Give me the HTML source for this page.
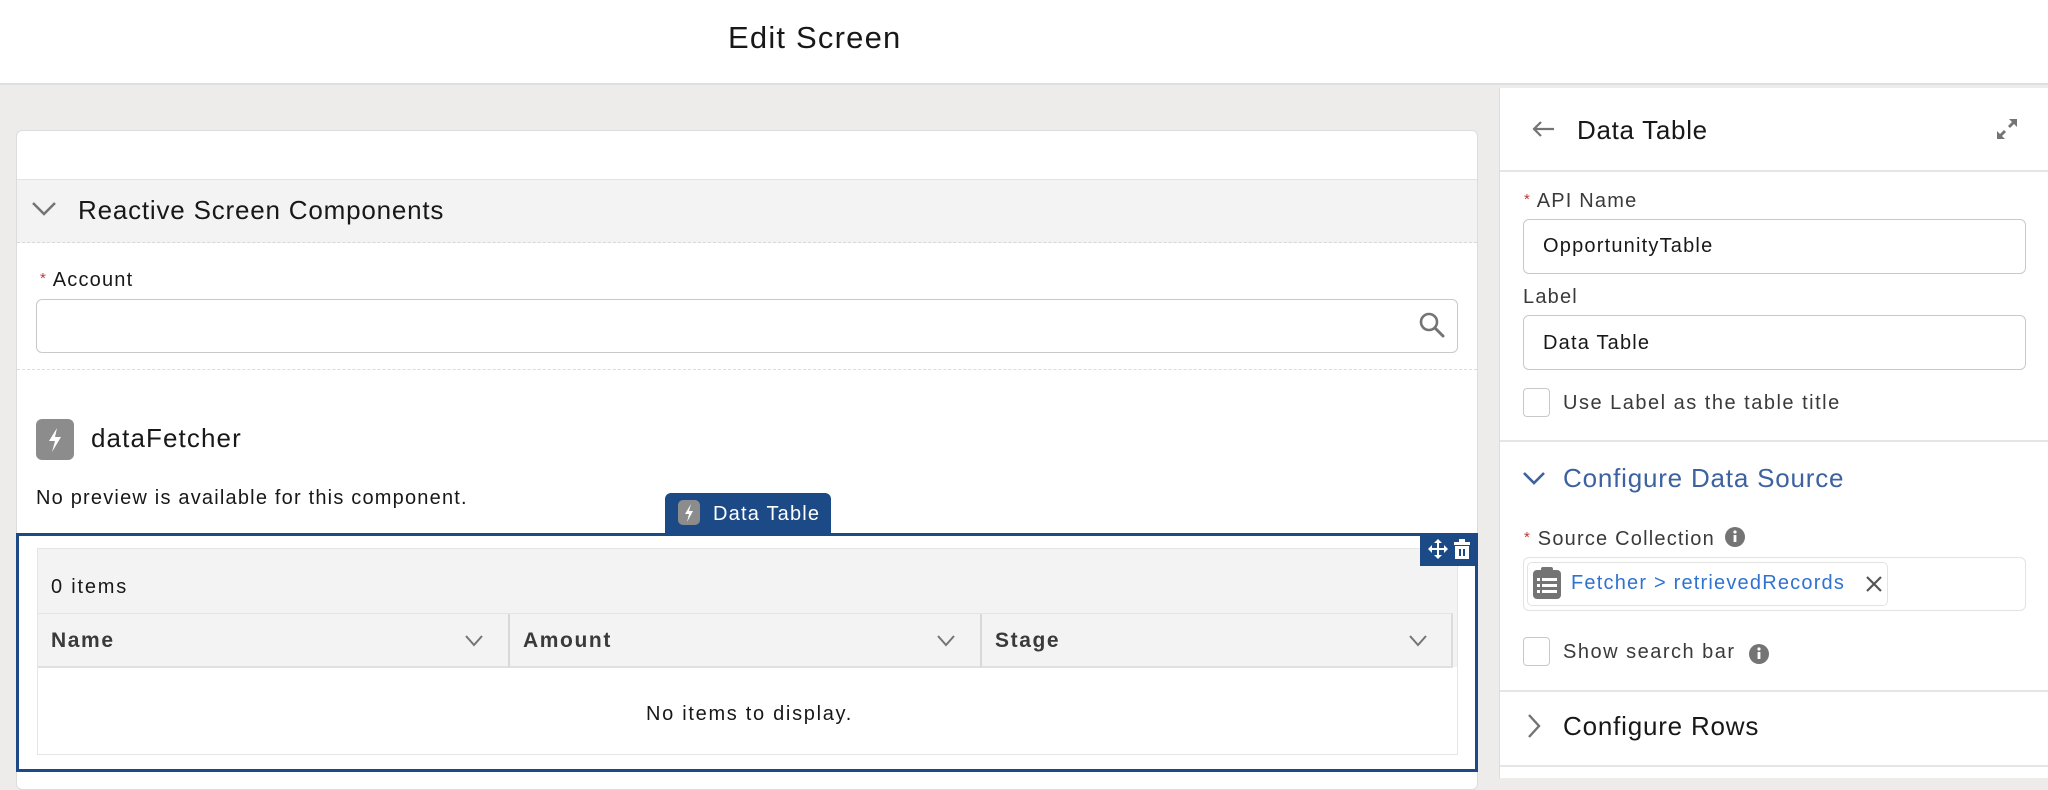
<!DOCTYPE html>
<html><head><meta charset="utf-8"><style>
*{box-sizing:border-box;margin:0;padding:0}
body{width:2048px;height:778px;overflow:hidden;background:#edecea;font-family:"Liberation Sans",sans-serif;color:#181818;position:relative}
.a{position:absolute}
.t{position:absolute;white-space:nowrap;line-height:1}
.s{font-size:20px;letter-spacing:1.2px}
.L{font-size:26px;letter-spacing:0.8px}
.inp{position:absolute;background:#fff;border:1.5px solid #c9c9c9;border-radius:6px}
.cb{position:absolute;width:27px;height:29px;border:1.5px solid #c9c9c9;border-radius:4px;background:#fff}
.req{color:#c23934}
.hl{position:absolute;height:1.5px;background:#e5e5e5}
</style></head><body>
<div class="a" style="left:0;top:0;width:2048px;height:85px;background:#fff;border-bottom:2px solid #dedede"></div>
<div class="t" style="left:728px;top:22px;font-size:31px;letter-spacing:1.2px">Edit Screen</div>

<!-- left card -->
<div class="a" style="left:16px;top:130px;width:1462px;height:660px;background:#fff;border:1.5px solid #dcdcdc;border-radius:6px"></div>
<div class="a" style="left:17px;top:179px;width:1460px;height:64px;background:#f3f3f3;border-bottom:1.5px dashed #d8d8d8;border-top:1px solid #e3e3e3"></div>
<svg class="a" style="left:31px;top:200px" width="26" height="18" viewBox="0 0 26 18"><path d="M2 3 L13 14 L24 3" fill="none" stroke="#747474" stroke-width="2.5"/></svg>
<div class="t L" style="left:78px;top:197px">Reactive Screen Components</div>
<div class="t s" style="left:40px;top:270px"><span class="req" style="font-size:15px;vertical-align:3px">*</span> Account</div>
<div class="inp" style="left:36px;top:299px;width:1422px;height:54px"></div>
<svg class="a" style="left:1418px;top:311px" width="28" height="28" viewBox="0 0 28 28"><circle cx="11" cy="11" r="8" fill="none" stroke="#747474" stroke-width="2.6"/><path d="M17 17 L25 25" stroke="#747474" stroke-width="3" stroke-linecap="round"/></svg>
<div class="a" style="left:17px;top:369px;width:1460px;border-top:1.5px dashed #dcdcdc"></div>

<div class="a" style="left:36px;top:419px;width:38px;height:41px;background:#8c8c8c;border-radius:6px"></div>
<svg class="a" style="left:44px;top:426px" width="22" height="28" viewBox="0 0 22 28"><path d="M13 2 L5 15 H11 L8 26 L17 11 H11 Z" fill="#fff"/></svg>
<div class="t" style="left:91px;top:425px;font-size:26px;letter-spacing:1.1px">dataFetcher</div>
<div class="t s" style="left:36px;top:488px">No preview is available for this component.</div>

<div class="a" style="left:665px;top:493px;width:166px;height:42px;background:#1b4a86;border-radius:6px 6px 0 0"></div>
<div class="a" style="left:678px;top:500px;width:22px;height:25px;background:#8c8c8c;border-radius:5px"></div>
<svg class="a" style="left:682px;top:503px" width="14" height="20" viewBox="0 0 14 20"><path d="M9 1 L3 11 H7 L5 19 L11 8 H7 Z" fill="#fff"/></svg>
<div class="t s" style="left:713px;top:504px;color:#fff">Data Table</div>

<div class="a" style="left:16px;top:533px;width:1462px;height:239px;border:3px solid #1b4a86"></div>

<div class="a" style="left:37px;top:548px;width:1421px;height:207px;border:1.5px solid #e5e5e5;background:#fff"></div>
<div class="a" style="left:38px;top:549px;width:1419px;height:118px;background:#f3f3f3"></div>
<div class="t" style="left:51px;top:577px;font-size:20px;letter-spacing:1.8px">0 items</div>
<div class="a" style="left:38px;top:613px;width:1415px;height:55px;border-top:1.5px solid #e5e5e5;border-bottom:2px solid #e0e0e0;border-right:2px solid #dcdcdc"></div>
<div class="a" style="left:508px;top:614px;width:2px;height:53px;background:#d8d8d8"></div>
<div class="a" style="left:980px;top:614px;width:2px;height:53px;background:#d8d8d8"></div>
<div class="t" style="left:51px;top:630px;font-size:21px;letter-spacing:1.6px;font-weight:bold;color:#3a3a3a">Name</div>
<div class="t" style="left:523px;top:630px;font-size:21px;letter-spacing:1.6px;font-weight:bold;color:#3a3a3a">Amount</div>
<div class="t" style="left:995px;top:630px;font-size:21px;letter-spacing:1.6px;font-weight:bold;color:#3a3a3a">Stage</div>
<svg class="a" style="left:464px;top:634px" width="20" height="14" viewBox="0 0 20 14"><path d="M2 2 L10 11 L18 2" fill="none" stroke="#747474" stroke-width="2"/></svg>
<svg class="a" style="left:936px;top:634px" width="20" height="14" viewBox="0 0 20 14"><path d="M2 2 L10 11 L18 2" fill="none" stroke="#747474" stroke-width="2"/></svg>
<svg class="a" style="left:1408px;top:634px" width="20" height="14" viewBox="0 0 20 14"><path d="M2 2 L10 11 L18 2" fill="none" stroke="#747474" stroke-width="2"/></svg>
<div class="t" style="left:646px;top:704px;font-size:20px;letter-spacing:1.7px">No items to display.</div>

<div class="a" style="left:1420px;top:534px;width:57px;height:32px;background:#1b4a86"></div>
<svg class="a" style="left:1427px;top:538px" width="22" height="22" viewBox="0 0 22 22" fill="#fff"><path d="M11 1 L7 5 H10 V10 H5 V7 L1 11 L5 15 V12 H10 V17 H7 L11 21 L15 17 H12 V12 H17 V15 L21 11 L17 7 V10 H12 V5 H15 Z"/></svg>
<svg class="a" style="left:1452px;top:538px" width="20" height="22" viewBox="0 0 20 22" fill="#fff"><rect x="7" y="1" width="6" height="3"/><rect x="2" y="4" width="16" height="3"/><path d="M3 8 H17 V21 H3 Z M7 11 V18 H9 V11 Z M11 11 V18 H13 V11 Z" fill-rule="evenodd"/></svg>

<!-- right panel -->
<div class="a" style="left:1499px;top:88px;width:549px;height:690px;background:#fff;border-left:1.5px solid #ddd"></div>
<svg class="a" style="left:1530px;top:119px" width="26" height="20" viewBox="0 0 26 20"><path d="M24 10 H4 M11 3 L4 10 L11 17" fill="none" stroke="#747474" stroke-width="2.2"/></svg>
<div class="t" style="left:1577px;top:117px;font-size:26px;letter-spacing:0.7px">Data Table</div>
<svg class="a" style="left:1995px;top:117px" width="24" height="24" viewBox="0 0 24 24" fill="#747474"><path d="M14 2 H22 V10 L19 7 L15 11 L13 9 L17 5 Z"/><path d="M10 22 H2 V14 L5 17 L9 13 L11 15 L7 19 Z"/></svg>
<div class="hl" style="left:1500px;top:170px;width:548px"></div>
<div class="t s" style="left:1524px;top:191px;color:#3a3a3a"><span class="req" style="font-size:15px;vertical-align:3px">*</span> API Name</div>
<div class="inp" style="left:1523px;top:219px;width:503px;height:55px"></div>
<div class="t s" style="left:1543px;top:236px">OpportunityTable</div>
<div class="t s" style="left:1523px;top:287px;color:#3a3a3a">Label</div>
<div class="inp" style="left:1523px;top:315px;width:503px;height:55px"></div>
<div class="t s" style="left:1543px;top:333px">Data Table</div>
<div class="cb" style="left:1523px;top:388px"></div>
<div class="t s" style="left:1563px;top:393px;color:#3a3a3a;letter-spacing:1.5px">Use Label as the table title</div>
<div class="hl" style="left:1500px;top:440px;width:548px"></div>
<svg class="a" style="left:1522px;top:470px" width="24" height="16" viewBox="0 0 24 16"><path d="M2 3 L12 13 L22 3" fill="none" stroke="#3c62a0" stroke-width="2.6"/></svg>
<div class="t L" style="left:1563px;top:465px;color:#3c62a0">Configure Data Source</div>
<div class="t s" style="left:1524px;top:529px;color:#3a3a3a"><span class="req" style="font-size:15px;vertical-align:3px">*</span> Source Collection</div>
<svg class="a" style="left:1724px;top:526px" width="22" height="22" viewBox="0 0 22 22"><circle cx="11" cy="11" r="10" fill="#747474"/><rect x="9.6" y="9" width="2.8" height="7" fill="#fff"/><circle cx="11" cy="6" r="1.6" fill="#fff"/></svg>
<div class="inp" style="left:1523px;top:557px;width:503px;height:54px;border-color:#e3e3e3"></div>
<div class="inp" style="left:1527px;top:562px;width:361px;height:44px;border-color:#e3e3e3;border-radius:5px"></div>
<svg class="a" style="left:1532px;top:566px" width="30" height="34" viewBox="0 0 30 34"><rect x="1" y="4" width="28" height="29" rx="4" fill="#747474"/><rect x="9" y="1" width="12" height="6" rx="2" fill="#747474"/><g fill="#fff"><rect x="5" y="12" width="3" height="3"/><rect x="10" y="12" width="15" height="3"/><rect x="5" y="18" width="3" height="3"/><rect x="10" y="18" width="15" height="3"/><rect x="5" y="24" width="3" height="3"/><rect x="10" y="24" width="15" height="3"/></g></svg>
<div class="t s" style="left:1571px;top:573px;color:#2f73d0">Fetcher &gt; retrievedRecords</div>
<svg class="a" style="left:1864px;top:574px" width="20" height="20" viewBox="0 0 20 20"><path d="M3 3 L17 17 M17 3 L3 17" stroke="#555" stroke-width="2.2"/></svg>
<div class="cb" style="left:1523px;top:637px"></div>
<div class="t s" style="left:1563px;top:642px;color:#3a3a3a;letter-spacing:1.5px">Show search bar</div>
<svg class="a" style="left:1748px;top:643px" width="22" height="22" viewBox="0 0 22 22"><circle cx="11" cy="11" r="10" fill="#747474"/><rect x="9.6" y="9" width="2.8" height="7" fill="#fff"/><circle cx="11" cy="6" r="1.6" fill="#fff"/></svg>
<div class="hl" style="left:1500px;top:690px;width:548px"></div>
<svg class="a" style="left:1526px;top:713px" width="16" height="26" viewBox="0 0 16 26"><path d="M3 2 L13 13 L3 24" fill="none" stroke="#747474" stroke-width="2.4"/></svg>
<div class="t L" style="left:1563px;top:713px">Configure Rows</div>
<div class="hl" style="left:1500px;top:765px;width:548px"></div>
</body></html>
